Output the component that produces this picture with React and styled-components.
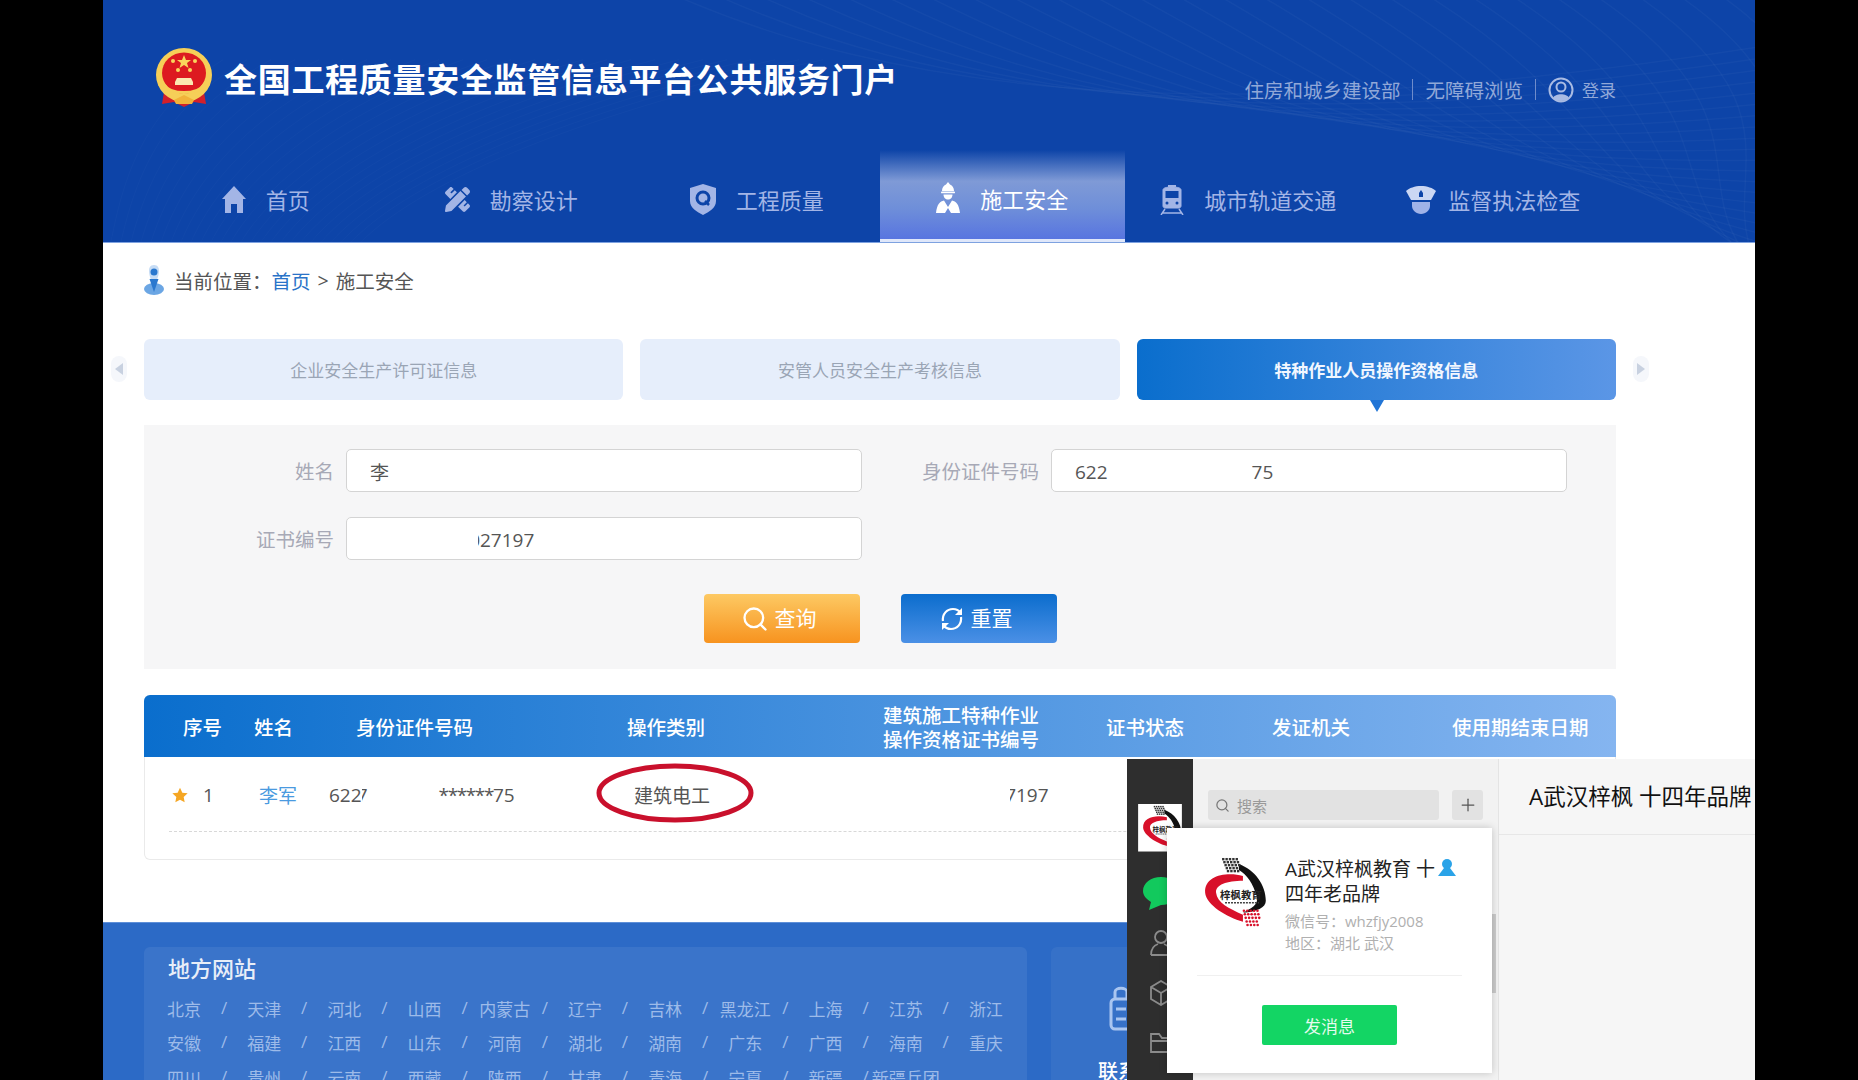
import React from 'react';
import styled, { createGlobalStyle } from 'styled-components';
import { FaPencilRuler } from 'react-icons/fa';
import { FiSearch, FiPlus } from 'react-icons/fi';

const fonts = '"Open Sans", "Noto Sans CJK SC", sans-serif';

const GlobalStyle = createGlobalStyle`
	html, body {
		margin: 0;
		height: 100%;
		background: #000;
		overflow: hidden;
	}
	body {
		font-family: ${fonts};
	}
`;

const navItems = [
	{ label: '首页', icon: <HomeIcon />, gap: 20 },
	{ label: '勘察设计', icon: <FaPencilRuler size={25} />, gap: 20 },
	{ label: '工程质量', icon: <ShieldIcon />, gap: 20 },
	{ label: '施工安全', icon: <WorkerIcon />, gap: 20, active: true },
	{ label: '城市轨道交通', icon: <TrainIcon />, gap: 19 },
	{ label: '监督执法检查', icon: <HatIcon />, gap: 12 }
];

const tabs = [
	{ label: '企业安全生产许可证信息' },
	{ label: '安管人员安全生产考核信息' },
	{ label: '特种作业人员操作资格信息', active: true }
];

const regions = [
	['北京', '天津', '河北', '山西', '内蒙古', '辽宁', '吉林', '黑龙江', '上海', '江苏', '浙江'],
	['安徽', '福建', '江西', '山东', '河南', '湖北', '湖南', '广东', '广西', '海南', '重庆'],
	['四川', '贵州', '云南', '西藏', '陕西', '甘肃', '青海', '宁夏', '新疆', '新疆兵团']
];

function HomeIcon() {
	return (
		<svg width='24' height='27' viewBox='0 0 24 27' fill='currentColor'>
			<path d='M12 0 L24 13 H21 V27 H15 V18 H9 V27 H3 V13 H0 Z' />
		</svg>
	);
}

function TrainIcon() {
	return (
		<svg width='26' height='32' viewBox='0 0 26 32' fill='none' stroke='currentColor'>
			<path d='M9 3 H17' strokeWidth='2' />
			<path d='M4 7 C4 5 7 4 13 4 C19 4 22 5 22 7 V23 C22 24 21 25 20 25 H6 C5 25 4 24 4 23 Z' fill='currentColor' strokeWidth='1' />
			<rect x='6.500' y='8' width='13' height='7' fill='#0d44a8' stroke='none' />
			<circle cx='8' cy='20' r='1.500' fill='#0d44a8' stroke='none' />
			<circle cx='18' cy='20' r='1.500' fill='#0d44a8' stroke='none' />
			<path d='M6 26 L2 32 M20 26 L24 32 M4 30 H22' strokeWidth='1.500' />
		</svg>
	);
}

function ShieldIcon() {
	return (
		<svg width='26' height='31' viewBox='0 0 26 31'>
			<path d='M13 0 L26 4 V17 C26 24 19 28 13 31 C7 28 0 24 0 17 V4 Z' fill='currentColor' />
			<circle cx='13' cy='14' r='6' fill='none' stroke='#0d44a8' strokeWidth='3' />
			<path d='M15 17 L19 21' stroke='#0d44a8' strokeWidth='2.500' />
		</svg>
	);
}

function WorkerIcon() {
	return (
		<svg width='24' height='31' viewBox='0 0 24 31' fill='currentColor'>
			<path d='M12 0 L14 2.500 C16.500 3.500 18 6 18 9 H6 C6 6 7.500 3.500 10 2.500 Z' />
			<rect x='5' y='9.500' width='14' height='1.800' rx='0.900' />
			<path d='M7.500 12.500 H16.500 C16.500 15.500 14.500 17.500 12 17.500 C9.500 17.500 7.500 15.500 7.500 12.500 Z' />
			<path d='M8 18.500 L12 25 L16 18.500 C20 19.500 23 22 24 31 H15 L12 26 L9 31 H0 C1 22 4 19.500 8 18.500 Z' />
		</svg>
	);
}

function HatIcon() {
	return (
		<svg width='30' height='29' viewBox='0 0 30 29'>
			<path d='M15 1 C21 1 27 3 30 6 L25 15 H5 L0 6 C3 3 9 1 15 1 Z' fill='#cbd7f3' />
			<path d='M15 5 L17 8 V12 H13 V8 Z' fill='#0d44a8' />
			<path d='M6 17 H24 V21 C24 25 20 29 15 29 C10 29 6 25 6 21 Z' fill='#a0b3e8' />
		</svg>
	);
}

function Emblem() {
	return (
		<svg width='56' height='60' viewBox='0 0 56 60'>
			<path d='M8 44 L6 56 L18 54 L28 59 L38 54 L50 56 L48 44 Z' fill='#d3202a' />
			<ellipse cx='28' cy='27' rx='28' ry='27' fill='#f6cf58' />
			<ellipse cx='28' cy='25' rx='22' ry='20.500' fill='#dd1a20' />
			<path d='M28 7 L30 12 L35 12 L31 15 L32.500 20 L28 17 L23.500 20 L25 15 L21 12 L26 12 Z' fill='#f9d65c' />
			<circle cx='17' cy='13' r='2' fill='#f9d65c' />
			<circle cx='39' cy='13' r='2' fill='#f9d65c' />
			<circle cx='22' cy='22' r='2' fill='#f9d65c' />
			<circle cx='34' cy='22' r='2' fill='#f9d65c' />
			<path d='M19 34 L21 30 H35 L37 34 V37 H19 Z' fill='#fbe9b0' />
			<path d='M8 37 C15 47 41 47 48 37' fill='none' stroke='#f6cf58' strokeWidth='3' />
			<path d='M18 52 L28 47 L38 52 L36 56 H20 Z' fill='#f1b33a' />
		</svg>
	);
}

function PinIcon() {
	return (
		<svg width='20' height='30' viewBox='0 0 20 30'>
			<ellipse cx='10' cy='24' rx='10' ry='6' fill='#6ba6e4' />
			<path d='M10 0 C14 0 15 3 15 6 C15 11 12 17 10 22 C8 17 5 11 5 6 C5 3 6 0 10 0 Z' fill='#c6dcf5' />
			<circle cx='10' cy='7' r='3.500' fill='#2a78cf' />
			<path d='M5.500 14 H14.500 L10 27 Z' fill='#2a78cf' />
		</svg>
	);
}

function UserCircleIcon() {
	return (
		<svg width='26' height='26' viewBox='0 0 26 26'>
			<circle cx='13' cy='13' r='11.500' fill='none' stroke='#a9bbe3' strokeWidth='2' />
			<circle cx='13' cy='10' r='4.500' fill='none' stroke='#a9bbe3' strokeWidth='2' />
			<path d='M5 21 C7 16 19 16 21 21 C17 25 9 25 5 21 Z' fill='#a9bbe3' />
		</svg>
	);
}

function RefreshIcon() {
	return (
		<svg width='26' height='26' viewBox='0 0 26 26' fill='none' stroke='#fff' strokeWidth='2.200'>
			<path d='M4 15 C3 8 8 3 14 3 C17 3 20 4.500 22 7' />
			<path d='M22 11 C23 18 18 23 12 23 C9 23 6 21.500 4 19' />
			<path d='M23 2 V9 H16 Z' fill='#fff' stroke='none' />
			<path d='M3 24 V17 H10 Z' fill='#fff' stroke='none' />
		</svg>
	);
}

function BrandLogo({ size }) {
	const dots = [];
	for (let r = 0; r < 5; r++) {
		for (let c = 0; c < 5 - (r > 2 ? 1 : 0); c++) {
			dots.push(<rect key={'k' + r + c} x={25 + c * 3.4 + r * 1.2} y={3 + r * 3} width='2.400' height='2.400' fill='#333' />);
			dots.push(<circle key={'r' + r + c} cx={47 + c * 3.400 + r * 0.900} cy={56 + r * 3.600} r='1.300' fill='#d8102a' />);
		}
	}
	return (
		<svg width={size} height={size * 1.08} viewBox='0 0 70 76'>
			<rect width='70' height='76' fill='#fff' />
			<path d='M42 9 C58 15 69 30 69 46 C69 53 60 57 46 58 C54 54 62 50 60 42 C56 28 50 20 42 15 Z' fill='#111' />
			<path d='M46 21 C30 17 7 20 8 38 C9 50 30 63 46 67 L46 60 C32 54 20 48 19 38 C18 30 30 26 46 26 Z' fill='#d8102a' />
			<text x='23' y='44' fontSize='10.500' fontWeight='700' fontFamily='"Noto Sans CJK SC", sans-serif' fill='#222'>梓枫教育</text>
			<path d='M28 48 H62' stroke='#444' strokeWidth='1.500' strokeDasharray='2 1' />
			{dots}
		</svg>
	);
}

function Swooshes() {
	const lines = [];
	for (let i = 0; i < 26; i++) {
		lines.push(
			<path
				key={i}
				d={`M${560 + i * 42} -10 C${780 + i * 42} ${90 + i * 2} ${1100 + i * 20} ${140 + i * 3} ${1700} ${40 + i * 12}`}
				fill='none'
				stroke='#fff'
				strokeOpacity='0.03'
				strokeWidth='1.500'
			/>
		);
		lines.push(
			<path
				key={'l' + i}
				d={`M${8 + i * 10} 243 C${20 + i * 12} 180 ${40 + i * 18} 110 ${120 + i * 24} 60`}
				fill='none'
				stroke='#fff'
				strokeOpacity='0.025'
			/>
		);
	}
	return (
		<HeaderArt viewBox='0 0 1652 243' preserveAspectRatio='none'>
			{lines}
		</HeaderArt>
	);
}

export default function App() {
	const regionList = regions.flat();
	return (
		<>
			<GlobalStyle />
			<Page>
				<Header>
					<Swooshes />
					<TopBar>
						<Brand>
							<Emblem />
							<BrandTitle>全国工程质量安全监管信息平台公共服务门户</BrandTitle>
						</Brand>
						<TopLinks>
							<TopLink>住房和城乡建设部</TopLink>
							<TopDivider />
							<TopLink>无障碍浏览</TopLink>
							<TopDivider />
							<UserCircleIcon />
							<LoginLink>登录</LoginLink>
						</TopLinks>
					</TopBar>
					<Nav>
						{navItems.map((item) => (
							<NavItem key={item.label} $active={item.active} $gap={item.gap}>
								{item.icon}
								<span>{item.label}</span>
							</NavItem>
						))}
					</Nav>
				</Header>

				<Main>
					<Breadcrumb>
						<PinIcon />
						<Crumb>当前位置：</Crumb>
						<CrumbLink>首页</CrumbLink>
						<CrumbArrow>&gt;</CrumbArrow>
						<Crumb>施工安全</Crumb>
					</Breadcrumb>

					<TabRow>
						<TabArrow $side='left'>
							<svg width='8' height='12' viewBox='0 0 8 12'><path d='M8 0 V12 L0 6 Z' fill='#c8d1e0' /></svg>
						</TabArrow>
						{tabs.map((tab) => (
							<Tab key={tab.label} $active={tab.active}>{tab.label}</Tab>
						))}
						<TabArrow $side='right'>
							<svg width='8' height='12' viewBox='0 0 8 12'><path d='M0 0 V12 L8 6 Z' fill='#c8d1e0' /></svg>
						</TabArrow>
					</TabRow>

					<SearchPanel>
						<FormGrid>
							<FieldLabel>姓名</FieldLabel>
							<FieldInput>李</FieldInput>
							<FieldLabel>身份证件号码</FieldLabel>
							<FieldInput>622<Spaced $gap={144}>75</Spaced></FieldInput>
							<FieldLabel>证书编号</FieldLabel>
							<FieldInput><Spaced $gap={108}><Clipped $width={2}>0</Clipped>27197</Spaced></FieldInput>
						</FormGrid>
						<ButtonRow>
							<ActionButton $tone='orange'>
								<FiSearch size={28} />
								<span>查询</span>
							</ActionButton>
							<ActionButton $tone='blue'>
								<RefreshIcon />
								<span>重置</span>
							</ActionButton>
						</ButtonRow>
					</SearchPanel>

					<TableCard>
						<TableHead>
							<HeadCell>序号</HeadCell>
							<HeadCell>姓名</HeadCell>
							<HeadCell>身份证件号码</HeadCell>
							<HeadCell>操作类别</HeadCell>
							<HeadCell>建筑施工特种作业<br />操作资格证书编号</HeadCell>
							<HeadCell>证书状态</HeadCell>
							<HeadCell>发证机关</HeadCell>
							<HeadCell>使用期结束日期</HeadCell>
						</TableHead>
						<TableBody>
							<TableRow>
								<RowIndex>
									<Star viewBox='0 0 24 24'><path d='M12 1 L15.500 8.500 L23.500 9.500 L17.500 15 L19 23 L12 19 L5 23 L6.500 15 L0.500 9.500 L8.500 8.500 Z' /></Star>
									1
								</RowIndex>
								<NameLink>李军</NameLink>
								<RowCell>622<Clipped $width={6}>7</Clipped><Spaced $gap={71}><Masked>******</Masked>75</Spaced></RowCell>
								<CategoryCell>
									建筑电工
									<Annotation width='160' height='62' viewBox='0 0 160 62'>
										<ellipse cx='80' cy='31' rx='76' ry='27' fill='none' stroke='#c9102c' strokeWidth='5' />
									</Annotation>
								</CategoryCell>
								<RowCell><Clipped $width={6}>7</Clipped>197</RowCell>
							</TableRow>
						</TableBody>
					</TableCard>
				</Main>

				<Footer>
					<RegionPanel>
						<RegionTitle>地方网站</RegionTitle>
						<RegionGrid>
							{regionList.map((name, i) => (
								<RegionCell key={name}>
									<RegionName>{name}</RegionName>
									{(i + 1) % 11 !== 0 && i < regionList.length - 1 && <RegionSlash>/</RegionSlash>}
								</RegionCell>
							))}
						</RegionGrid>
					</RegionPanel>
					<ContactPanel>
						<svg width='50' height='48' viewBox='0 0 50 48' fill='none' stroke='#a9c5f0' strokeWidth='3'>
							<path d='M17 14 V7 C17 2 29 2 29 7 V14' />
							<rect x='13' y='14' width='30' height='30' rx='4' />
							<path d='M18 24 H28 M18 34 H28' />
						</svg>
						<ContactLabel>联系方式</ContactLabel>
					</ContactPanel>
				</Footer>

				<ChatWindow>
					<ChatSidebar>
						<SidebarAvatar><BrandLogo size={44} /></SidebarAvatar>
						<SideIcon>
							<svg width='40' height='36' viewBox='0 0 40 36'><path d='M20 2 C30 2 38 8 38 16 C38 24 30 30 20 30 L8 35 L10 27 C5 24 2 20 2 16 C2 8 10 2 20 2 Z' fill='#12c95d' /></svg>
						</SideIcon>
						<SideIcon>
							<svg width='40' height='26' viewBox='0 0 40 26' fill='none' stroke='#8b8b8b' strokeWidth='1.800'>
								<circle cx='20' cy='7' r='6' />
								<path d='M10 25 C10 18 14 15 17 14 M30 25 C30 18 26 15 23 14 M10 25 H30' />
							</svg>
						</SideIcon>
						<SideIcon>
							<svg width='40' height='26' viewBox='0 0 40 26' fill='none' stroke='#8b8b8b' strokeWidth='1.800'>
								<path d='M20 1 L30 7 V19 L20 25 L10 19 V7 Z M10 7 L20 13 L30 7 M20 13 V25' />
							</svg>
						</SideIcon>
						<SideIcon>
							<svg width='40' height='22' viewBox='0 0 40 22' fill='none' stroke='#8b8b8b' strokeWidth='1.800'>
								<path d='M10 2 H18 L21 6 H32 V20 H10 Z M10 9 H32' />
							</svg>
						</SideIcon>
					</ChatSidebar>
					<ChatList>
						<ChatSearchRow>
							<ChatSearch>
								<FiSearch size={15} color='#777' />
								<span>搜索</span>
							</ChatSearch>
							<ChatAdd><FiPlus size={20} strokeWidth={1.500} /></ChatAdd>
						</ChatSearchRow>
						<ScrollThumb />
					</ChatList>
					<ChatPane>
						<ChatTitle>A武汉梓枫 十四年品牌</ChatTitle>
					</ChatPane>
					<ProfileCard>
						<ProfileTop>
							<BrandLogo size={70} />
							<ProfileInfo>
								<ProfileName>
									A武汉梓枫教育 十
									<svg width='20' height='20' viewBox='0 0 20 20' fill='#2aa3e8'><circle cx='10' cy='6' r='5' /><path d='M7 10 H13 L19 18 H1 Z' /></svg>
									<br />四年老品牌
								</ProfileName>
								<ProfileMeta>微信号：whzfjy2008</ProfileMeta>
								<ProfileMeta>地区：湖北 武汉</ProfileMeta>
							</ProfileInfo>
						</ProfileTop>
						<ProfileDivider />
						<SendButton>发消息</SendButton>
					</ProfileCard>
				</ChatWindow>
			</Page>
		</>
	);
}

const Page = styled.div`
	position: relative;
	width: 1652px;
	height: 1080px;
	margin: 0 auto;
	overflow: hidden;
	background: #fff;
`;

const Header = styled.header`
	position: relative;
	height: 243px;
	box-sizing: border-box;
	padding: 0 139px 0 40px;
	background: #0d44a8;
	border-bottom: 1px solid #7ea2e0;
`;

const HeaderArt = styled.svg`
	position: absolute;
	inset: 0;
	width: 100%;
	height: 100%;
`;

const TopBar = styled.div`
	position: relative;
	display: flex;
	justify-content: space-between;
	height: 150px;
	padding-left: 13px;
`;

const Brand = styled.div`
	display: flex;
	align-items: center;
	gap: 12px;
	height: 156px;
`;

const BrandTitle = styled.h1`
	margin: 0;
	font-size: 33px;
	font-weight: 700;
	letter-spacing: 0.7px;
	color: #fff;
`;

const TopLinks = styled.div`
	display: flex;
	align-items: center;
	height: 179px;
	color: #91a8d8;
`;

const TopLink = styled.span`
	font-size: 19.500px;
`;

const TopDivider = styled.i`
	width: 1px;
	height: 21px;
	margin: 0 12px;
	background: #6f8ccb;
`;

const LoginLink = styled.span`
	margin-left: 8px;
	font-size: 17px;
`;

const Nav = styled.nav`
	position: relative;
	display: grid;
	grid-template-columns: repeat(6, 245.500px);
	height: 92px;
`;

const NavItem = styled.a`
	display: flex;
	align-items: center;
	justify-content: center;
	gap: ${(p) => p.$gap}px;
	padding-top: 6px;
	box-sizing: border-box;
	font-size: 22px;
	color: ${(p) => (p.$active ? '#fff' : '#a3b5e6')};
	background: ${(p) => (p.$active ? 'linear-gradient(180deg, rgba(110,140,215,0) 0%, #7f9ad6 35%, #6f8fd9 65%, #5875e0 100%)' : 'none')};
	border-bottom: ${(p) => (p.$active ? '3px solid #dfe7fa' : 'none')};
`;

const Main = styled.main`
	padding: 0 139px 62px 41px;
`;

const Breadcrumb = styled.div`
	display: flex;
	align-items: center;
	height: 74px;
	padding-bottom: 22px;
	font-size: 19.500px;

	svg {
		margin-right: 10px;
	}
`;

const Crumb = styled.span`
	color: #555;
`;

const CrumbLink = styled.span`
	color: #2a73c8;
`;

const CrumbArrow = styled.span`
	margin: 0 7px;
	color: #555;
`;

const TabRow = styled.div`
	position: relative;
	display: grid;
	grid-template-columns: repeat(3, 1fr);
	gap: 17px;
	height: 61px;
`;

const TabArrow = styled.span`
	position: absolute;
	top: 17px;
	${(p) => (p.$side === 'left' ? 'left: -33px;' : 'right: -33px;')}
	display: flex;
	align-items: center;
	justify-content: center;
	width: 16px;
	height: 26px;
	border-radius: 8px;
	background: #f5f7fb;
`;

const Tab = styled.div`
	position: relative;
	display: flex;
	align-items: center;
	justify-content: center;
	border-radius: 6px;
	font-size: 17px;
	font-weight: ${(p) => (p.$active ? 700 : 400)};
	color: ${(p) => (p.$active ? '#f2f7ff' : '#9aa5b5')};
	background: ${(p) => (p.$active ? 'linear-gradient(90deg, #0a6ecd, #5b96e6)' : '#e6eefb')};

	${(p) => p.$active && `
		&::after {
			content: '';
			position: absolute;
			left: 50%;
			bottom: -12px;
			margin-left: -6px;
			border-top: 12px solid #2175d6;
			border-left: 7px solid transparent;
			border-right: 7px solid transparent;
		}
	`}
`;

const SearchPanel = styled.section`
	height: 244px;
	box-sizing: border-box;
	margin-top: 25px;
	padding-top: 24px;
	background: #f6f6f7;
`;

const FormGrid = styled.div`
	display: grid;
	grid-template-columns: 190px 516px 165px 516px;
	grid-auto-rows: 43px;
	gap: 25px 12px;
	align-items: center;
`;

const FieldLabel = styled.label`
	text-align: right;
	font-size: 19.500px;
	color: #a7a9b6;
`;

const FieldInput = styled.div`
	display: flex;
	align-items: center;
	height: 43px;
	box-sizing: border-box;
	padding: 3px 0 0 23px;
	border: 1px solid #d4d4d4;
	border-radius: 5px;
	background: #fff;
	font-size: 19px;
	color: #555;
`;

const Spaced = styled.span`
	margin-left: ${(p) => p.$gap}px;
`;

const Clipped = styled.span`
	display: inline-block;
	width: ${(p) => p.$width}px;
	overflow: hidden;
	direction: rtl;
	vertical-align: bottom;
`;

const Masked = styled.span`
	letter-spacing: -1.400px;
`;

const ButtonRow = styled.div`
	display: flex;
	justify-content: center;
	gap: 41px;
	margin-top: 34px;
`;

const ActionButton = styled.button`
	display: flex;
	align-items: center;
	justify-content: center;
	gap: 6px;
	width: 156px;
	height: 49px;
	padding: 0 6px 0 0;
	border: 0;
	border-radius: 4px;
	font-family: inherit;
	font-size: 21px;
	color: #fff;
	background: ${(p) => (p.$tone === 'orange' ? 'linear-gradient(180deg, #fdc963, #f7931f)' : 'linear-gradient(180deg, #0b6dcd, #4b90e6)')};

	span {
		margin-top: -4px;
	}
`;

const TableCard = styled.section`
	margin-top: 26px;
	height: 165px;
	box-sizing: border-box;
	border: 1px solid #eaeaea;
	border-top: 0;
	border-radius: 6px;
`;

const TableHead = styled.div`
	display: grid;
	grid-template-columns: 71px 102px 271px 256px 223px 166px 180px 1fr;
	align-items: center;
	height: 62px;
	margin: 0 -1px;
	padding: 3px 0 0 39px;
	box-sizing: border-box;
	border-radius: 6px 6px 0 0;
	background: linear-gradient(90deg, #0a6ecd, #85b5f0);
`;

const HeadCell = styled.div`
	font-size: 19.500px;
	line-height: 24px;
	font-weight: 500;
	color: #fff;
	white-space: nowrap;
`;

const TableBody = styled.div`
	margin: 0 24px;
	height: 74px;
	border-bottom: 1px dashed #d8d8d8;
`;

const TableRow = styled.div`
	display: grid;
	grid-template-columns: 87px 70px 305px 376px 1fr;
	align-items: center;
	height: 76px;
	padding-left: 3px;
	font-size: 19px;
	color: #555;
`;

const RowIndex = styled.div`
	display: flex;
	align-items: center;
	gap: 15px;
`;

const Star = styled.svg`
	width: 16px;
	height: 16px;
	fill: #f5a623;
`;

const NameLink = styled.div`
	color: #4a9ae0;
`;

const RowCell = styled.div`
	white-space: nowrap;
`;

const CategoryCell = styled.div`
	position: relative;
`;

const Annotation = styled.svg`
	position: absolute;
	left: -39px;
	top: -19px;
`;

const Footer = styled.footer`
	display: flex;
	gap: 24px;
	height: 200px;
	padding: 24px 139px 0 41px;
	background: #2c6ac6;
	border-top: 1px solid #5e8fd8;
`;

const RegionPanel = styled.div`
	width: 883px;
	box-sizing: border-box;
	padding: 6px 0 0 20px;
	border-radius: 6px 6px 0 0;
	background: rgba(255, 255, 255, 0.07);
`;

const RegionTitle = styled.h3`
	margin: 0 0 8px 4px;
	font-size: 22px;
	line-height: 30px;
	font-weight: 500;
	color: #e8eef8;
`;

const RegionGrid = styled.div`
	display: grid;
	grid-template-columns: repeat(11, 80.200px);
	grid-auto-rows: 34.500px;
	align-items: center;
	font-size: 17px;
	color: #9dbbe9;
`;

const RegionCell = styled.div`
	display: flex;
`;

const RegionName = styled.span`
	display: flex;
	justify-content: center;
	width: 40px;
	white-space: nowrap;
`;

const RegionSlash = styled.span`
	width: 40px;
	text-align: center;
`;

const ContactPanel = styled.div`
	flex: 1;
	padding: 38px 0 0 47px;
	border-radius: 6px 6px 0 0;
	background: rgba(255, 255, 255, 0.05);
`;

const ContactLabel = styled.div`
	margin-top: 18px;
	font-size: 20px;
	font-weight: 500;
	color: #fff;
`;

const ChatWindow = styled.div`
	position: absolute;
	left: 1024px;
	top: 759px;
	right: 0;
	bottom: 0;
	display: flex;
`;

const ChatSidebar = styled.div`
	width: 66px;
	flex: none;
	padding-top: 45px;
	background: #2e2e2e;
`;

const SidebarAvatar = styled.div`
	display: flex;
	justify-content: center;
	height: 64px;
	margin-left: -1px;
`;

const SideIcon = styled.div`
	display: flex;
	align-items: center;
	justify-content: center;
	height: 50px;
	padding-left: 2px;
`;

const ChatList = styled.div`
	position: relative;
	width: 306px;
	flex: none;
	padding: 31px 15px 0;
	box-sizing: border-box;
	background: #f2f2f2;
	border-right: 1px solid #e4e4e4;
`;

const ChatSearchRow = styled.div`
	display: flex;
	gap: 13px;
`;

const ChatSearch = styled.div`
	display: flex;
	align-items: center;
	gap: 7px;
	width: 232px;
	height: 30px;
	padding-left: 7px;
	box-sizing: border-box;
	border-radius: 3px;
	background: #e2e2e2;
	font-size: 15px;
	color: #999;
`;

const ChatAdd = styled.div`
	display: flex;
	align-items: center;
	justify-content: center;
	width: 31px;
	height: 30px;
	border-radius: 3px;
	background: #e2e2e2;
	color: #555;
`;

const ScrollThumb = styled.div`
	position: absolute;
	right: 2px;
	top: 155px;
	width: 5px;
	height: 79px;
	background: #cbcbcb;
`;

const ChatPane = styled.div`
	flex: 1;
	min-width: 0;
	background: #f6f6f6;
`;

const ChatTitle = styled.div`
	height: 76px;
	box-sizing: border-box;
	padding: 22px 0 0 30px;
	border-bottom: 1px solid #e7e7e7;
	font-size: 22.500px;
	line-height: 32px;
	white-space: nowrap;
	overflow: hidden;
	color: #111;
`;

const ProfileCard = styled.div`
	position: absolute;
	left: 40px;
	top: 69px;
	width: 325px;
	height: 245px;
	box-sizing: border-box;
	padding: 27px 30px 0;
	background: #fff;
	box-shadow: 0 0 8px rgba(0, 0, 0, 0.2);
`;

const ProfileTop = styled.div`
	display: flex;
	gap: 18px;
	height: 120px;
`;

const ProfileInfo = styled.div`
	flex: 1;
	min-width: 0;
`;

const ProfileName = styled.div`
	margin: 2px 0 3px;
	font-size: 19px;
	line-height: 25px;
	white-space: nowrap;
	color: #222;

	svg {
		margin-left: 2px;
		vertical-align: -2px;
	}
`;

const ProfileMeta = styled.div`
	font-size: 15px;
	line-height: 22px;
	white-space: nowrap;
	color: #b0b0b0;
`;

const ProfileDivider = styled.div`
	height: 1px;
	background: #f0f0f0;
`;

const SendButton = styled.button`
	display: block;
	width: 135px;
	height: 40px;
	margin: 29px auto 0;
	border: 0;
	border-radius: 2px;
	background: #13d564;
	font-family: inherit;
	font-size: 17px;
	color: #e4fbee;
`;
